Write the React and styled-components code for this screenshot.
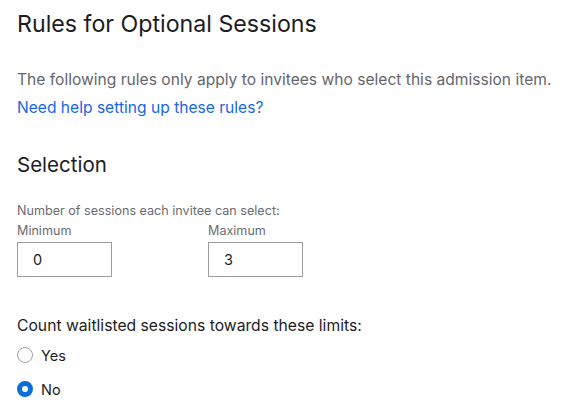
import React, { useState } from 'react'
import styled, { createGlobalStyle } from 'styled-components'

const Global = createGlobalStyle`
  body {
    margin: 0;
    background: #fff;
    font-family: Inter, 'Noto Sans', sans-serif;
    color: #1f1f25;
  }
`

const Page = styled.div`
  padding: 9px 0 0 17px;
`

const Title = styled.h1`
  margin: 0;
  font-size: 23.2px;
  font-weight: 400;
  line-height: 30px;
  color: #1c1c24;
`

const Intro = styled.p`
  margin: 27px 0 0;
  font-size: 15.6px;
  line-height: 28px;
  color: #66666d;
  white-space: nowrap;
`

const HelpLink = styled.a`
  display: block;
  font-size: 15.6px;
  line-height: 28px;
  color: #1766e8;
  text-decoration: none;
`

const SectionTitle = styled.h2`
  margin: 30px 0 0;
  font-size: 20.5px;
  font-weight: 400;
  line-height: 26px;
  color: #1c1c24;
`

const Hint = styled.div`
  margin-top: 23px;
  font-size: 12.6px;
  line-height: 20px;
  color: #6b6b72;
`

const Fields = styled.div`
  display: flex;
  gap: 96px;
`

const Field = styled.label`
  display: flex;
  flex-direction: column;
  font-size: 12.6px;
  line-height: 20px;
  color: #6b6b72;
`

const NumberBox = styled.input`
  box-sizing: border-box;
  width: 95px;
  height: 35px;
  margin-top: 1px;
  padding: 0 15px;
  border: 1px solid #9a9ca0;
  border-radius: 0;
  font-family: inherit;
  font-size: 14.5px;
  color: #1c1c24;
  outline: none;
`

const Question = styled.div`
  margin-top: 38px;
  padding-bottom: 1px;
  font-size: 15.7px;
  line-height: 22px;
  color: #1c1c24;
`

const RadioRow = styled.label`
  display: flex;
  align-items: center;
  gap: 8px;
  height: 34px;
  font-size: 14.5px;
  color: #1c1c24;
  cursor: pointer;
`

const Dot = styled.span`
  box-sizing: border-box;
  width: 16px;
  height: 16px;
  border-radius: 50%;
  border: ${p => (p.$on ? '5px solid #0a6fd8' : '1px solid #a0a0a6')};
  background: #fff;
`

export default function App() {
  const [count, setCount] = useState('no')
  return (
    <Page>
      <Global />
      <Title>Rules for Optional Sessions</Title>
      <Intro>The following rules only apply to invitees who select this admission item.</Intro>
      <HelpLink href="#">Need help setting up these rules?</HelpLink>
      <SectionTitle>Selection</SectionTitle>
      <Hint>Number of sessions each invitee can select:</Hint>
      <Fields>
        <Field>
          Minimum
          <NumberBox defaultValue="0" />
        </Field>
        <Field>
          Maximum
          <NumberBox defaultValue="3" />
        </Field>
      </Fields>
      <Question>Count waitlisted sessions towards these limits:</Question>
      <RadioRow onClick={() => setCount('yes')}>
        <Dot $on={count === 'yes'} />
        Yes
      </RadioRow>
      <RadioRow onClick={() => setCount('no')}>
        <Dot $on={count === 'no'} />
        No
      </RadioRow>
    </Page>
  )
}
